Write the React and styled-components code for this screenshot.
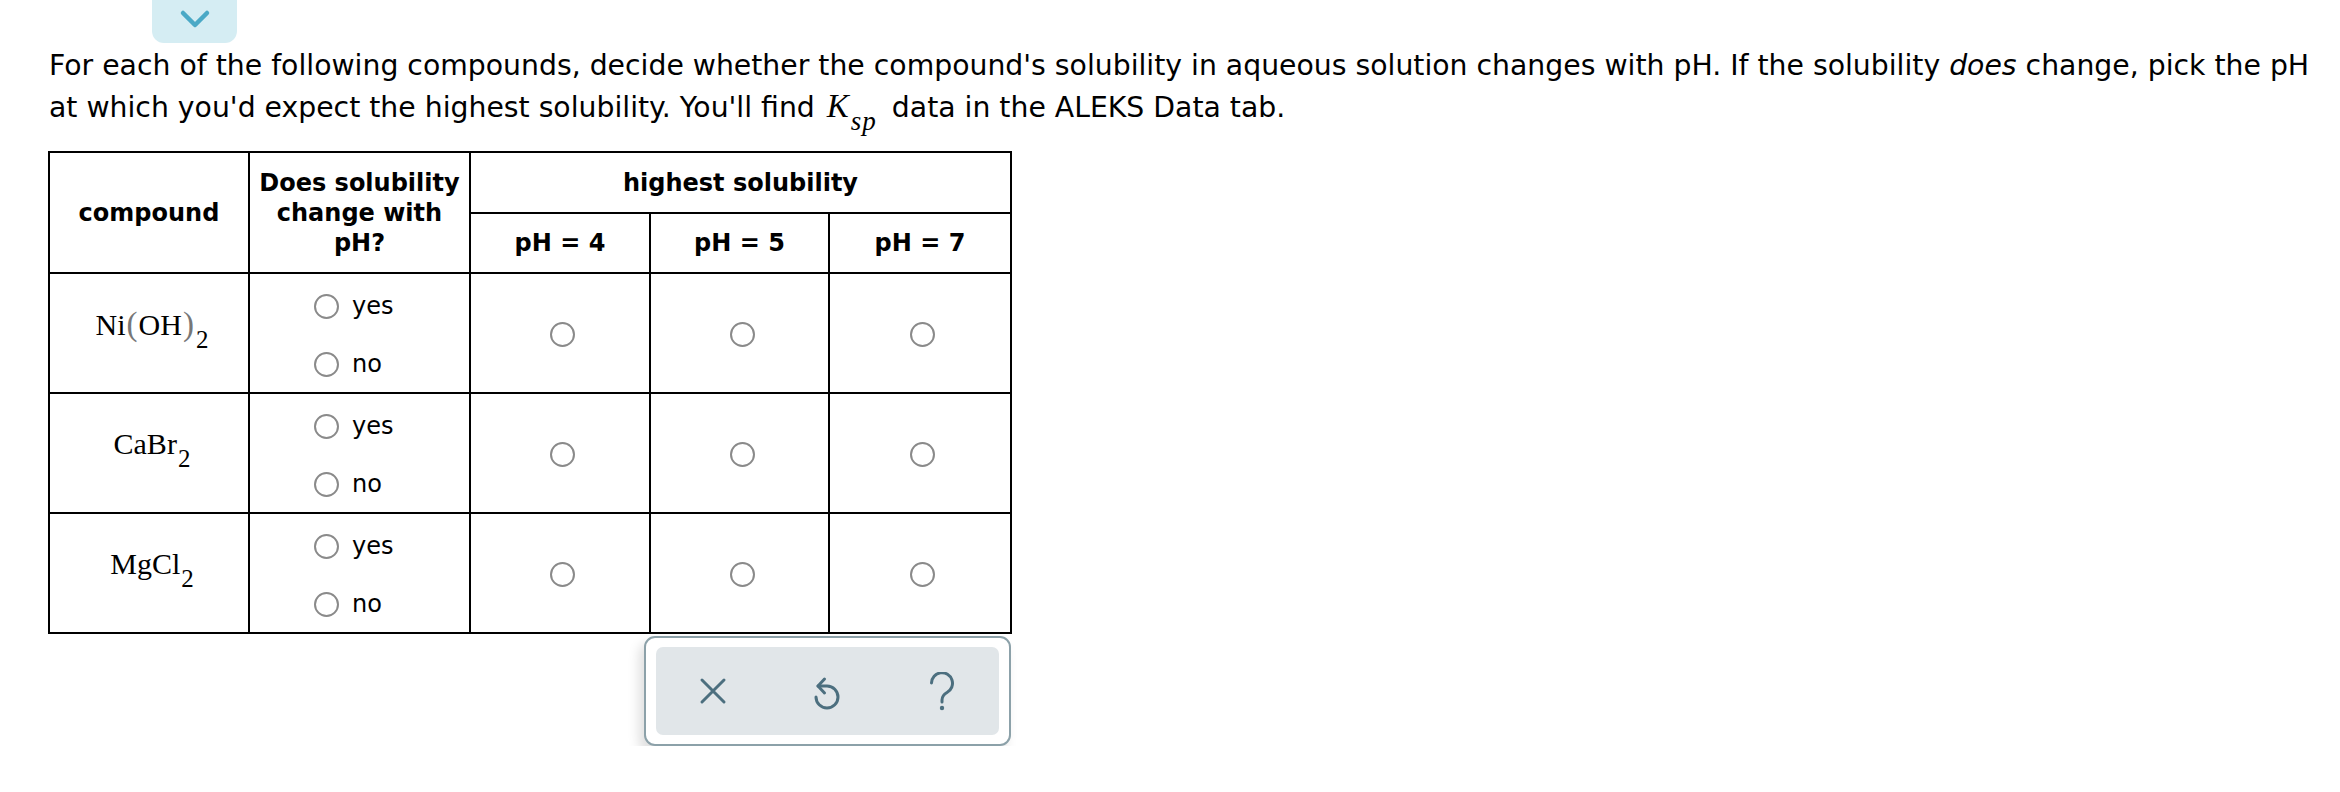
import React from 'react';
import styled, { createGlobalStyle } from 'styled-components';

const GlobalStyle = createGlobalStyle`
  html, body {
    margin: 0;
    padding: 0;
    background: #ffffff;
  }
  body {
    font-family: "DejaVu Sans", Verdana, sans-serif;
    color: #000000;
  }
`;

const Page = styled.div`
  padding-left: 48px;
  width: 2292px;
`;

const TabHandle = styled.div`
  margin-left: 104px;
  width: 85px;
  height: 43px;
  background-color: #d5edf3;
  border-radius: 0 0 12px 12px;
  display: flex;
  align-items: flex-start;
  justify-content: center;
`;

const Prompt = styled.p`
  margin: 2px 0 0 1px;
  max-width: 2268px;
  font-size: 28.3px;
  line-height: 42px;
`;

const Ksp = styled.span`
  font-family: "Liberation Serif", "Times New Roman", serif;
  font-style: italic;
  font-size: 33px;
  line-height: 0;
  margin: 0 6px 0 3px;
  sub {
    font-size: 27px;
    line-height: 0;
    vertical-align: -13px;
    margin-left: 2px;
    letter-spacing: 1px;
  }
`;

const Answer = styled.div`
  margin-top: 22px;
  width: 964px;
  display: flex;
  flex-direction: column;
  align-items: flex-end;
`;

const Grid = styled.table`
  width: 964px;
  border-collapse: collapse;
  table-layout: fixed;
  font-size: 24px;
`;

const Head = styled.th`
  border: 2px solid #000;
  font-weight: bold;
  text-align: center;
  vertical-align: middle;
  line-height: 30px;
  height: ${p => p.$h || 58}px;
  padding: 0;
`;

const Cell = styled.td`
  border: 2px solid #000;
  height: 118px;
  padding: 0;
  text-align: center;
  vertical-align: middle;
`;

const Formula = styled.span`
  font-family: "Liberation Serif", "Times New Roman", serif;
  font-size: 30px;
  position: relative;
  left: 3px;
  top: -9px;
  sub {
    font-size: 25px;
    vertical-align: -13px;
    line-height: 0;
    margin-left: 1px;
  }
`;

const Paren = styled.span`
  color: #777;
  font-size: 33px;
  margin: 0 1px;
`;

const Choices = styled.div`
  display: flex;
  flex-direction: column;
  gap: 33px;
  padding-left: 64px;
  padding-top: 5px;
`;

const Choice = styled.label`
  display: flex;
  align-items: center;
  gap: 13px;
  font-size: 24px;
  line-height: 25px;
`;

const Radio = styled.span`
  display: inline-block;
  box-sizing: border-box;
  width: 25px;
  height: 25px;
  border-radius: 50%;
  border: 2px solid #8a8a8a;
  background: #fff;
  margin-left: ${p => (p.$shift ? 6 : 0)}px;
  vertical-align: middle;
`;

const Toolbar = styled.div`
  margin-top: 2px;
  margin-right: 1px;
  width: 367px;
  height: 110px;
  box-sizing: border-box;
  border: 2px solid #8ca1a9;
  border-radius: 11px;
  background: #fff;
  padding: 9px 10px 9px 10px;
  box-shadow: -5px 7px 12px rgba(0, 0, 0, 0.13);
`;

const ToolPanel = styled.div`
  height: 100%;
  background: #e1e6e9;
  border-radius: 7px;
  display: grid;
  grid-template-columns: 1fr 1fr 1fr;
  align-items: center;
  justify-items: center;
`;

const ToolButton = styled.button`
  border: none;
  background: transparent;
  padding: 0;
  display: flex;
  align-items: center;
  justify-content: center;
  cursor: pointer;
  margin-top: ${p => p.$dy || 0}px;
`;

const iconColor = '#4c6f7f';

const Chevron = () => (
  <svg width="34" height="22" viewBox="0 0 34 22" style={{ marginTop: 8 }}>
    <path d="M5 5 L17 17 L29 5" fill="none" stroke="#4aa9c6" strokeWidth="4.5"
      strokeLinecap="round" strokeLinejoin="round" />
  </svg>
);

const CloseIcon = () => (
  <svg width="28" height="28" viewBox="0 0 28 28">
    <path d="M3 3 L25 25 M25 3 L3 25" stroke={iconColor} strokeWidth="3"
      strokeLinecap="round" fill="none" />
  </svg>
);

const UndoIcon = () => (
  <svg width="28" height="36" viewBox="0 0 28 36">
    <path d="M5 11 H14 A11 11 0 1 1 3 22" stroke={iconColor} strokeWidth="3"
      strokeLinecap="round" fill="none" />
    <path d="M11.5 4 L5 11 L11.5 18" stroke={iconColor} strokeWidth="3"
      strokeLinecap="round" strokeLinejoin="round" fill="none" />
  </svg>
);

const HelpIcon = () => (
  <svg width="28" height="40" viewBox="0 0 28 40">
    <path d="M3.5 11 A10.5 10.5 0 1 1 19 20.5 Q14 23.5 14 28 V30"
      stroke={iconColor} strokeWidth="3" strokeLinecap="round" fill="none" />
    <circle cx="14" cy="36" r="2.2" fill={iconColor} />
  </svg>
);

const compounds = [
  { key: 'ni', label: <>Ni<Paren>(</Paren>OH<Paren>)</Paren><sub>2</sub></> },
  { key: 'ca', label: <>CaBr<sub>2</sub></> },
  { key: 'mg', label: <>MgCl<sub>2</sub></> },
];

export default function App() {
  return (
    <Page>
      <GlobalStyle />
      <TabHandle>
        <Chevron />
      </TabHandle>
      <Prompt>
        For each of the following compounds, decide whether the compound's solubility in aqueous
        solution changes with pH. If the solubility <i>does</i> change, pick the pH at which you'd
        expect the highest solubility. You'll find <Ksp>K<sub>sp</sub></Ksp> data in the ALEKS Data tab.
      </Prompt>
      <Answer>
        <Grid>
          <colgroup>
            <col style={{ width: 200 }} />
            <col style={{ width: 221 }} />
            <col style={{ width: 180 }} />
            <col style={{ width: 179 }} />
            <col style={{ width: 182 }} />
          </colgroup>
          <thead>
            <tr>
              <Head rowSpan={2}>compound</Head>
              <Head rowSpan={2}>Does solubility<br />change with<br />pH?</Head>
              <Head colSpan={3} $h={59}>highest solubility</Head>
            </tr>
            <tr>
              <Head>pH = 4</Head>
              <Head>pH = 5</Head>
              <Head>pH = 7</Head>
            </tr>
          </thead>
          <tbody>
            {compounds.map(c => (
              <tr key={c.key}>
                <Cell><Formula>{c.label}</Formula></Cell>
                <Cell style={{ textAlign: 'left' }}>
                  <Choices>
                    <Choice><Radio />yes</Choice>
                    <Choice><Radio />no</Choice>
                  </Choices>
                </Cell>
                <Cell><Radio $shift /></Cell>
                <Cell><Radio $shift /></Cell>
                <Cell><Radio $shift /></Cell>
              </tr>
            ))}
          </tbody>
        </Grid>
        <Toolbar>
          <ToolPanel>
            <ToolButton><CloseIcon /></ToolButton>
            <ToolButton $dy={4}><UndoIcon /></ToolButton>
            <ToolButton $dy={2}><HelpIcon /></ToolButton>
          </ToolPanel>
        </Toolbar>
      </Answer>
    </Page>
  );
}
